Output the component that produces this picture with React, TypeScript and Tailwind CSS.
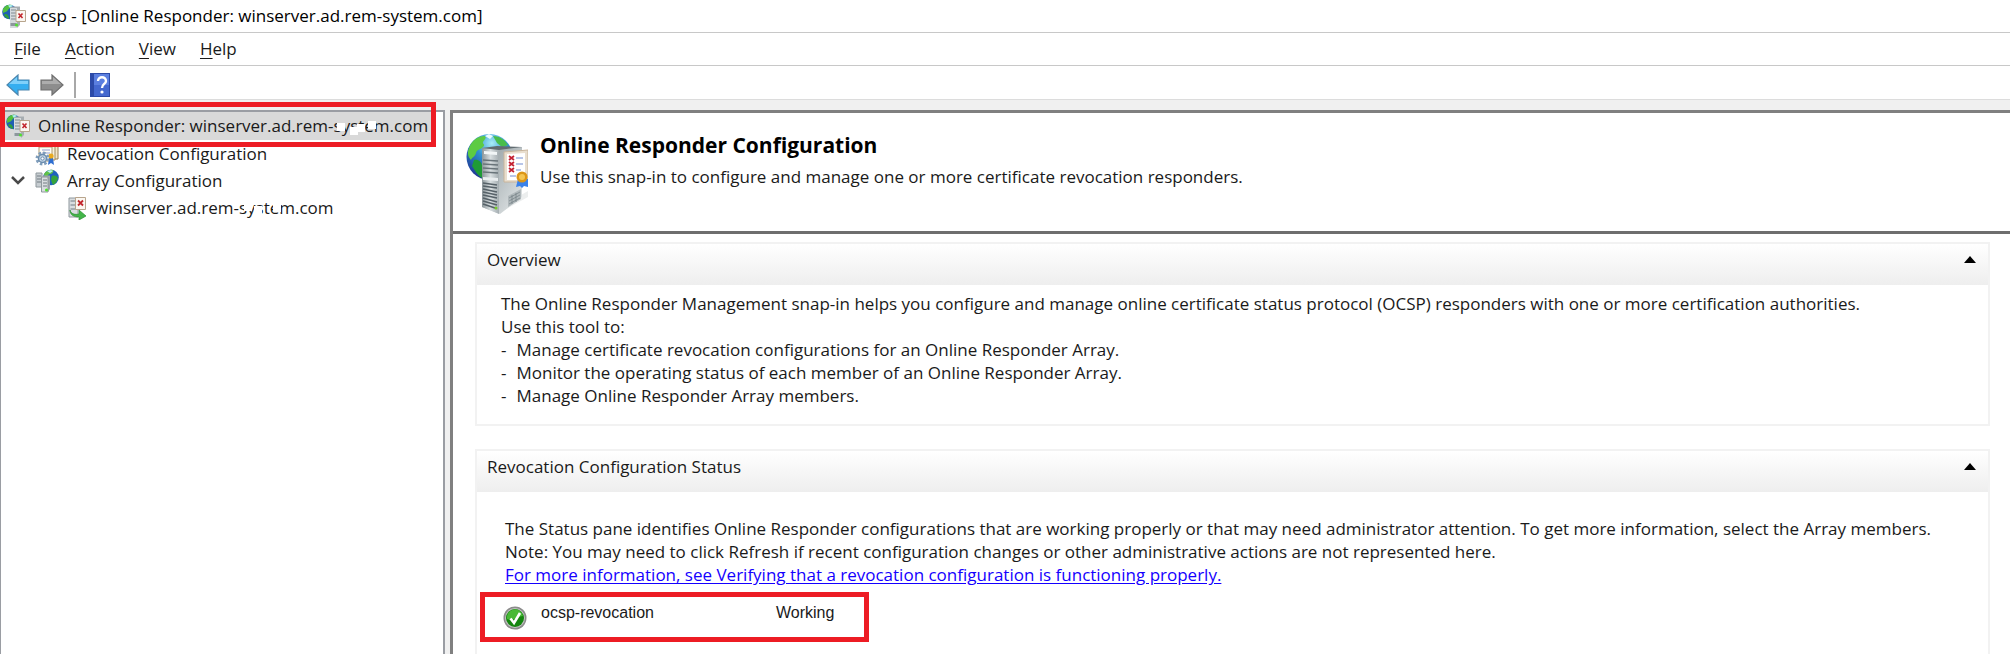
import type { ReactNode } from "react";

const menus = ["File", "Action", "View", "Help"];

const tasks = [
  "Manage certificate revocation configurations for an Online Responder Array.",
  "Monitor the operating status of each member of an Online Responder Array.",
  "Manage Online Responder Array members.",
];

const configurations = [{ name: "ocsp-revocation", status: "Working" }];

function ResponderIcon() {
  return (
    <svg viewBox="0 0 24 24" className="h-6 w-6 shrink-0" aria-hidden="true">
      <circle cx="7.5" cy="8" r="7.3" fill="#1f5fb4" />
      <path d="M1 5c2-4 6-5 9-4 0 3-3 3-4 5s-4 2-5 3z" fill="#54c03e" />
      <path d="M3 10c2 0 4 1 4 5-2-.4-4-2-5-4z" fill="#2f9e3c" />
      <path d="M6 1.5c2-1 4-.6 5 .3L8 4z" fill="#a9ecf5" />
      <path d="M8 4l2-1.5h8V21l-3 3H8z" fill="#a7adb1" />
      <path d="M8 4h7v20H8z" fill="#d5dadd" />
      <path d="M9 6h5M9 9h5M9 12h5M9 15h5" stroke="#808b91" />
      <path d="M8.5 19h6v3h-6z" fill="#8d979c" />
      <circle cx="14.5" cy="21" r="1.5" fill="#4fe02c" />
      <path d="M14 6.5h9.500v11H14z" fill="#fbf7f1" stroke="#b8a58d" />
      <path d="M16.500 9.500l4 4.500M20.500 9.500l-4 4.500" stroke="#c2262c" strokeWidth="1.6" />
    </svg>
  );
}

function RevocationIcon() {
  return (
    <svg viewBox="0 0 24 24" className="h-6 w-6 shrink-0" aria-hidden="true">
      <path d="M10 1h13v16h-3" fill="#f3e6c8" stroke="#9a8052" />
      <path d="M7 3h13v15H7z" fill="#f7efd9" stroke="#a18a5e" />
      <path d="M4 5h13v14H4z" fill="#fffdf6" stroke="#b09a70" />
      <path d="M7 8h8M7 11h8" stroke="#8f9dd1" />
      <path d="M14 16l-1 7 3-2 3 2-1-7z" fill="#2e6ed0" />
      <circle cx="16" cy="14" r="2.6" fill="#e9aa1e" />
      <circle cx="7.5" cy="16.5" r="5.500" fill="none" stroke="#7f9dbb" strokeWidth="3" strokeDasharray="2.4 1.9" />
      <circle cx="7.5" cy="16.5" r="4" fill="#c3d5e6" stroke="#6b8cad" strokeWidth="1.5" />
      <circle cx="7.5" cy="16.5" r="1.6" fill="#fff" stroke="#6b8cad" />
    </svg>
  );
}

function ArrayIcon() {
  return (
    <svg viewBox="0 0 24 24" className="h-6 w-6 shrink-0" aria-hidden="true">
      <path d="M1 4h6v14H1z" fill="#c7cdd1" stroke="#8f989d" />
      <path d="M2 7h4M2 10h4M2 13h4" stroke="#727d83" />
      <circle cx="16" cy="8.5" r="7.8" fill="#1f62bd" />
      <path d="M9 5c2-3 6-5 9-4 1 2-1 4-3 4s-3 3-2 5c-2 0-4-2-4-5z" fill="#60c246" />
      <path d="M17 7c3-1 5 0 6 2-1 4-3 6-5 7-1-3-3-5-1-9z" fill="#35a43c" />
      <path d="M12 2c2-1 5-1 6 0l-3 2z" fill="#b6f0f6" />
      <path d="M7 8l2-1.500h6V20l-2 3H7z" fill="#9da5aa" />
      <path d="M6.500 8H13v15H6.500z" fill="#d9dde0" stroke="#8f989d" />
      <path d="M8 11h4M8 14h4M8 17h4" stroke="#727d83" />
      <circle cx="11.5" cy="21" r="1.5" fill="#4fe02c" />
    </svg>
  );
}

function MemberIcon() {
  return (
    <svg viewBox="0 0 20 24" className="h-6 w-5 shrink-0" aria-hidden="true">
      <path d="M2 2h9v19H2z" fill="#d9dde0" stroke="#8f989d" />
      <path d="M3.500 5h6M3.500 9h6M3.500 13h6" stroke="#727d83" />
      <path d="M8.500 1.500h10v12h-10z" fill="#fbf7f1" stroke="#b8a58d" />
      <path d="M11 4.500l5 5M16 4.500l-5 5" stroke="#c2262c" strokeWidth="1.8" />
      <path d="M3 14c1 4 5 5 9 4v-4l7 6-7 4v-3c-5 0-9-2-9-7z" fill="#43b649" stroke="#2b8f34" strokeWidth=".7" />
    </svg>
  );
}

function ServerIcon() {
  return (
    <svg viewBox="0 0 62 82" className="h-[82px] w-[62px] shrink-0" aria-hidden="true">
      <defs>
        <radialGradient id="globe" cx=".55" cy=".2" r=".85">
          <stop offset="0" stopColor="#a8edf7" />
          <stop offset=".4" stopColor="#2f92d2" />
          <stop offset="1" stopColor="#1d2d8c" />
        </radialGradient>
        <linearGradient id="front" x2="1">
          <stop offset="0" stopColor="#8b9599" />
          <stop offset=".5" stopColor="#d8dee0" />
          <stop offset="1" stopColor="#a4adb1" />
        </linearGradient>
        <linearGradient id="side" x2="1" y2="1">
          <stop offset="0" stopColor="#8e999d" />
          <stop offset="1" stopColor="#e6eaeb" />
        </linearGradient>
      </defs>
      <path d="M33 80l29-16v-6L48 66z" fill="#eceeee" />
      <circle cx="23.5" cy="24" r="23" fill="url(#globe)" />
      <path d="M3 15C6 7 12 3 19 3c2 2-1 4-2 6s3 2 0 5-6 2-7 6-4 4-5 7c-3-3-4-7-2-12z" fill="#5dcb43" />
      <path d="M8 27c4-1 8 2 8 6v12c-5-3-7-8-10-12z" fill="#1f9b35" />
      <path d="M27 3c7 0 12 4 15 9l-6 2-5-4z" fill="#48bd4b" />
      <path d="M19 3l4-2 4 2-3 3z" fill="#eafcff" />
      <path d="M16 16l17-2h23v50L34 81l-18-7z" fill="url(#side)" />
      <path d="M16 15l17 1v65l-17-7z" fill="url(#front)" />
      <path d="M16 15l15-2 25 1-23 3z" fill="#616b70" />
      <path d="M18 18l13 1v3l-13-1z" fill="#f2f6f7" />
      <path d="M17 27l15 1M17 31l15 1M17 35l15 1M17 39l15 1" stroke="#69747a" strokeWidth="1.5" />
      <path d="M17 44l15 1v3l-15-1z" fill="#e9edef" />
      <path
        d="M17 50l14 2M17 53l14 2M17 56l14 3M17 59l14 3M17 62l14 3M17 65l14 4M17 68l14 4M17 71l12 4"
        stroke="#566168"
        strokeWidth="1.6"
      />
      <circle cx="30" cy="75" r="1.5" fill="#76c92e" />
      <path d="M42 63l13-7v10l-13 8z" fill="#b0b8bb" />
      <path d="M43 65l11-6M43 68l11-6M43 71l11-6M46 62v9M50 60v9" stroke="#737f84" strokeWidth=".7" />
      <path d="M38 19l24-2v32H38z" fill="#e9dece" stroke="#c7b49b" />
      <path d="M41 21l18-1v27H41z" fill="#fff" />
      <path
        d="M43 23l5 4M48 23l-5 4M43 29l5 4M48 29l-5 4M43 35l5 4M48 35l-5 4"
        stroke="#c32032"
        strokeWidth="1.7"
      />
      <path d="M50 25h7M50 31h7M50 37h5M44 43h6" stroke="#a1b3df" strokeWidth="1.3" />
      <path d="M52 46l-2 8 4-1 2 2 2-2 4 1V46z" fill="#3981ea" />
      <circle cx="56" cy="44" r="5.5" fill="#dc9616" />
      <circle cx="56" cy="44" r="3" fill="#f5c551" />
    </svg>
  );
}

function Arrow({ back = false }: { back?: boolean }) {
  return (
    <svg viewBox="0 0 24 22" className="h-[22px] w-6" aria-hidden="true">
      {back ? (
        <>
          <path d="M1 11L12 1v5h11v10H12v5z" fill="#35aef0" stroke="#4d86ad" strokeWidth="1.2" />
          <path d="M3 10l8-7v4h11v3z" fill="#7fd0fa" />
        </>
      ) : (
        <>
          <path d="M23 11L12 1v5H1v10h11v5z" fill="#8d8d8d" stroke="#6f6f6f" strokeWidth="1.2" />
          <path d="M21 10l-8-7v4H2v3z" fill="#adadad" />
        </>
      )}
    </svg>
  );
}

function HelpIcon() {
  return (
    <svg viewBox="0 0 20 24" className="h-6 w-5" aria-hidden="true">
      <path d="M0 0h20v24H0z" fill="#2c4aa8" />
      <path d="M4 1h15v22H4z" fill="#5b7fe0" />
      <path d="M4 12h15v11H4z" fill="#4468cf" />
      <path d="M8 8c0-5 8-5 8 0 0 3-4 3-4 7" fill="none" stroke="#fff" strokeWidth="2.4" />
      <circle cx="12" cy="19" r="1.6" fill="#fff" />
    </svg>
  );
}

function CheckIcon() {
  return (
    <svg viewBox="0 0 24 24" className="h-6 w-6" aria-hidden="true">
      <circle cx="12" cy="12" r="11.5" fill="#8b8b8b" />
      <circle cx="12" cy="12" r="10" fill="#c4c4c4" />
      <circle cx="12" cy="12" r="9" fill="#14850f" />
      <path d="M4 13a8 8 0 0 1 16-3c-5 0-10 6-16 3z" fill="#48b936" />
      <path d="M7.500 12.500l3.500 4.500 6-10" fill="none" stroke="#fff" strokeWidth="2.6" />
    </svg>
  );
}

function TreeItem({ icon, className, children }: { icon: ReactNode; className: string; children: ReactNode }) {
  return (
    <li className={`flex items-center gap-2 whitespace-nowrap ${className}`}>
      {icon}
      {children}
    </li>
  );
}

function Section({ title, className, children }: { title: string; className: string; children: ReactNode }) {
  return (
    <section className={`border-2 border-[#f2f2f2] ${className}`}>
      <h2>
        <button
          type="button"
          aria-expanded="true"
          className="flex h-[41px] w-full items-start justify-between bg-linear-to-b from-white to-[#eeeeee] pt-0.5 pr-3 pl-2.5 text-left leading-7"
        >
          {title}
          <svg viewBox="0 0 12 7" className="mt-2.5 h-[7px] w-3" aria-hidden="true">
            <path d="M6 0l6 7H0z" />
          </svg>
        </button>
      </h2>
      {children}
    </section>
  );
}

export default function App() {
  return (
    <div className="flex min-h-screen flex-col bg-white font-['Open_Sans','Noto_Sans',sans-serif] text-[17px] text-[#1a1a1a]">
      <header>
        <div className="flex h-8 items-center gap-1 pl-0.5 text-black">
          <ResponderIcon />
          <h1>ocsp - [Online Responder: winserver.ad.rem-system.com]</h1>
        </div>
        <nav aria-label="Menu" className="flex h-[34px] items-center gap-6 border-y border-[#c8c8c8] pl-3.5">
          {menus.map((menu) => (
            <button key={menu} type="button" className="leading-6">
              <span className="underline underline-offset-3">{menu[0]}</span>
              {menu.slice(1)}
            </button>
          ))}
        </nav>
        <div role="toolbar" className="flex h-[34px] items-center border-b border-[#dcdcdc] pt-1 pl-1.5">
          <button type="button" aria-label="Back">
            <Arrow back />
          </button>
          <button type="button" aria-label="Forward" className="ml-2.5">
            <Arrow />
          </button>
          <span className="ml-2.5 h-[26px] w-0.5 bg-[#a8a8a8]" />
          <button type="button" aria-label="Help topics" className="ml-3.5">
            <HelpIcon />
          </button>
        </div>
      </header>

      <main className="flex grow gap-[5px] bg-[#f0f0f0] pt-2.5">
        {/* Console tree */}
        <aside className="relative w-[445px] shrink-0 border-t-2 border-r-2 border-l border-[#9a9da3] bg-white">
          <ul>
            <TreeItem icon={<ResponderIcon />} className="mr-3 h-7 bg-[#d9d9d9] pl-[5px]">
              Online Responder: winserver.ad.rem-system.com
            </TreeItem>
            <TreeItem icon={<RevocationIcon />} className="h-[27px] pl-[34px]">
              Revocation Configuration
            </TreeItem>
            <TreeItem
              icon={
                <>
                  <svg viewBox="0 0 14 9" className="mr-0.5 h-[9px] w-3.5" aria-hidden="true">
                    <path d="M1 1l6 6 6-6" fill="none" stroke="#4a4a4a" strokeWidth="2.5" />
                  </svg>
                  <ArrayIcon />
                </>
              }
              className="h-[27px] pl-2.5"
            >
              Array Configuration
            </TreeItem>
            <TreeItem icon={<MemberIcon />} className="h-[27px] pl-[66px]">
              winserver.ad.rem-system.com
            </TreeItem>
          </ul>

          {/* Redaction marks over the host names */}
          <span className="absolute top-[11px] left-[336px] h-2 w-2 bg-white" />
          <span className="absolute top-[15px] left-[349px] h-2 w-2 bg-white" />
          <span className="absolute top-[12px] left-[356px] h-2 w-2 bg-white" />
          <span className="absolute top-[9px] left-[367px] h-2 w-2 bg-white" />
          <span className="absolute top-[91px] left-[243px] h-2 w-2 bg-white" />
          <span className="absolute top-[94px] left-[253px] h-2 w-2 bg-white" />
          <span className="absolute top-[92px] left-[272px] h-2 w-2 bg-white" />

          <span className="absolute -top-2.5 -left-px h-[45px] w-[436px] border-5 border-[#ed1c24]" />
        </aside>

        {/* Details pane */}
        <div className="flex min-w-0 grow flex-col border-t-3 border-l-3 border-[#808080] bg-white">
          <div className="flex h-[121px] items-start gap-3 border-b-3 border-[#6e6e6e] pt-5 pl-[13px]">
            <ServerIcon />
            <div>
              <h2 className="text-[21px] leading-6 font-bold text-black">Online Responder Configuration</h2>
              <p className="mt-2 leading-6">
                Use this snap-in to configure and manage one or more certificate revocation responders.
              </p>
            </div>
          </div>

          <div className="flex grow flex-col gap-[23px] pt-2 pr-5 pl-[22px]">
            <Section title="Overview" className="pb-[17px]">
              <div className="px-6 pt-[7px] leading-[23px]">
                <p>
                  The Online Responder Management snap-in helps you configure and manage online certificate status
                  protocol (OCSP) responders with one or more certification authorities.
                </p>
                <p>Use this tool to:</p>
                <ul>
                  {tasks.map((task) => (
                    <li key={task} className="flex gap-2.5">
                      <span>-</span>
                      {task}
                    </li>
                  ))}
                </ul>
              </div>
            </Section>

            <Section title="Revocation Configuration Status" className="grow border-b-0">
              <div className="px-7 pt-[25px] leading-[23px]">
                <p>
                  The Status pane identifies Online Responder configurations that are working properly or that may need
                  administrator attention. To get more information, select the Array members.
                </p>
                <p>
                  Note: You may need to click Refresh if recent configuration changes or other administrative actions
                  are not represented here.
                </p>
                <a href="#verify" className="text-[#1400ff] underline underline-offset-2">
                  For more information, see Verifying that a revocation configuration is functioning properly.
                </a>
              </div>
              <div className="mt-1.5 ml-[3px] h-[50px] w-[389px] border-5 border-[#ed1c24] pt-[5px] pl-[18px]">
                <table
                  aria-label="Revocation configuration status"
                  className="font-['Liberation_Sans',sans-serif] text-[16px] leading-[22px]"
                >
                  <tbody>
                    {configurations.map((config) => (
                      <tr key={config.name} className="align-top">
                        <td className="w-[38px] pt-1">
                          <CheckIcon />
                        </td>
                        <td className="w-[235px]">{config.name}</td>
                        <td>{config.status}</td>
                      </tr>
                    ))}
                  </tbody>
                </table>
              </div>
            </Section>
          </div>
        </div>
      </main>
    </div>
  );
}
